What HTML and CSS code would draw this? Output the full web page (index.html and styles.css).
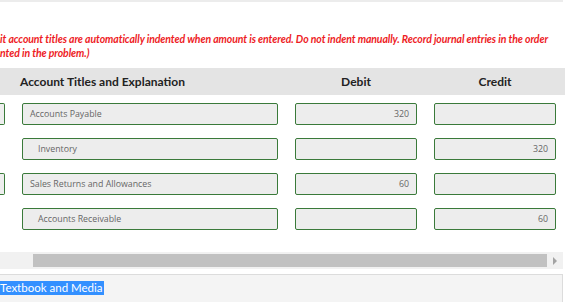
FILE: index.html
```html
<!DOCTYPE html>
<html>
<head>
<meta charset="utf-8">
<link rel="stylesheet" href="styles.css">
</head>
<body>
<div class="page">
  <div class="topbar"></div>
  <p class="note">it account titles are automatically indented when amount is entered. Do not indent manually. Record journal entries in the order<br>nted in the problem.)</p>
  <div class="head">
    <div class="h-title">Account Titles and Explanation</div>
    <div class="h-num">Debit</div>
    <div class="h-num">Credit</div>
  </div>
  <div class="rows">
    <div class="row">
      <div class="stub"></div>
      <div class="field">Accounts Payable</div>
      <div class="field num">320</div>
      <div class="field num"></div>
    </div>
    <div class="row">
      <div class="stub hidden"></div>
      <div class="field indent">Inventory</div>
      <div class="field num"></div>
      <div class="field num">320</div>
    </div>
    <div class="row">
      <div class="stub"></div>
      <div class="field">Sales Returns and Allowances</div>
      <div class="field num">60</div>
      <div class="field num"></div>
    </div>
    <div class="row">
      <div class="stub hidden"></div>
      <div class="field indent">Accounts Receivable</div>
      <div class="field num"></div>
      <div class="field num">60</div>
    </div>
  </div>
  <div class="scroll">
    <div class="thumb"></div>
    <div class="arrow"></div>
  </div>
  <div class="media"><span class="sel">Textbook and Media</span></div>
</div>
</body>
</html>
```
FILE: styles.css
```css
html, body {
  margin: 0;
  padding: 0;
  background: #fff;
  overflow: hidden;
}
.page {
  width: 565px;
  height: 302px;
  font-family: Lato, "Open Sans", sans-serif;
  overflow: hidden;
}
.topbar {
  width: 563px;
  height: 2px;
  background: #ececec;
}
.note {
  margin: 30px 0 0 0;
  font-size: 10.5px;
  line-height: 14px;
  font-style: italic;
  font-weight: 700;
  color: #ee1c25;
  white-space: nowrap;
  letter-spacing: -0.1px;
}
.head {
  margin-top: 8px;
  height: 27px;
  background: #e4e4e4;
  display: grid;
  grid-template-columns: 22px 256px 17px 122px 17px 122px;
  align-items: center;
  font-weight: 700;
  font-size: 12px;
  color: #222;
}
.h-title {
  grid-column: 2;
  margin-left: -2px;
}
.h-num:nth-child(2) { grid-column: 4; text-align: center; }
.h-num:nth-child(3) { grid-column: 6; text-align: center; }
.rows {
  display: flex;
  flex-direction: column;
  gap: 13px;
  margin-top: 8px;
}
.row {
  display: grid;
  grid-template-columns: 5px 17px 256px 17px 122px 17px 122px;
  height: 22px;
}
.stub {
  grid-column: 1;
  border: 1px solid #3a7a3a;
  border-left: none;
  border-radius: 0 2px 2px 0;
  background: #eee;
}
.stub.hidden { visibility: hidden; }
.field {
  box-sizing: border-box;
  border: 1px solid #3a7a3a;
  border-radius: 2px;
  background: #ededed;
  font-family: "Open Sans", sans-serif;
  font-size: 8.8px;
  color: #666;
  line-height: 20px;
  padding: 0 7px;
  white-space: nowrap;
}
.row .field:nth-child(2) { grid-column: 3; }
.row .field:nth-child(3) { grid-column: 5; }
.row .field:nth-child(4) { grid-column: 7; }
.field.indent { padding-left: 15px; }
.field.num { text-align: right; }
.scroll {
  margin-top: 22px;
  height: 17px;
  width: 563px;
  background: #f1f1f1;
  display: flex;
  align-items: center;
  padding-left: 33px;
  box-sizing: border-box;
}
.thumb {
  width: 514px;
  height: 13px;
  background: #c1c1c1;
}
.arrow {
  margin-left: 6px;
  width: 0;
  height: 0;
  border-top: 4px solid transparent;
  border-bottom: 4px solid transparent;
  border-left: 4px solid #a3a3a3;
}
.media {
  margin-top: 5px;
  width: 563px;
  height: 40px;
  box-sizing: border-box;
  border-top: 1px solid #dcdcdc;
  border-right: 1px solid #dcdcdc;
  background: #f4f4f4;
  padding-top: 6px;
  font-size: 11.5px;
  line-height: 14px;
}
.sel {
  background: #3390ff;
  color: #fff;
  padding: 0 1px 0 0;
  display: inline-block;
  line-height: 14px;
}
```
